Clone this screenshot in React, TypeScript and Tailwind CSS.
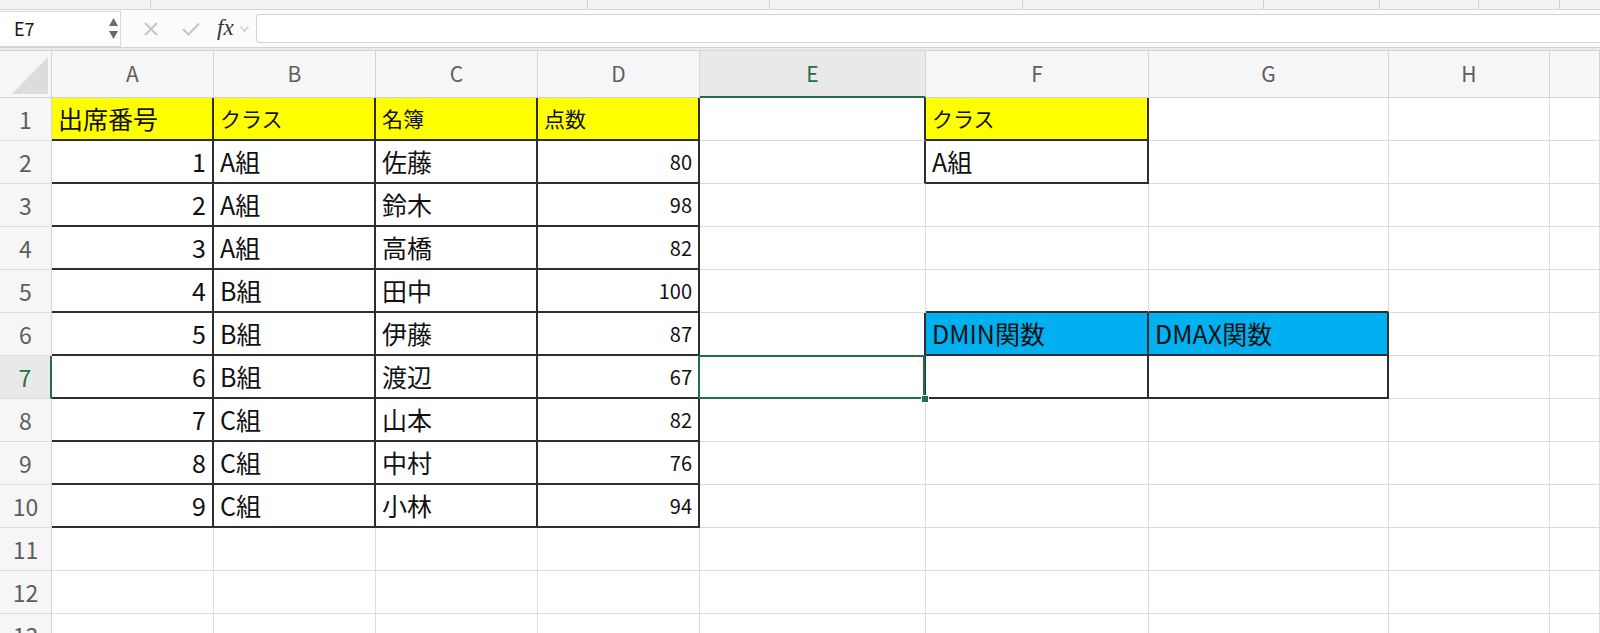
import React from "react";
import clsx from "clsx";

type CellData = {
  text: string;
  size: "big" | "head" | "num";
  right?: boolean;
  fill?: "yellow" | "blue";
};

const COLUMN_LETTERS = [ "A", "B", "C", "D", "E", "F", "G", "H", "" ];
const ROWS = [ 1, 2, 3, 4, 5, 6, 7, 8, 9, 10, 11, 12, 13 ];
const SELECTED_COL = 5;
const SELECTED_ROW = 7;

const students: [ number, string, string, number ][] = [
  [ 1, "A組", "佐藤", 80 ],
  [ 2, "A組", "鈴木", 98 ],
  [ 3, "A組", "高橋", 82 ],
  [ 4, "B組", "田中", 100 ],
  [ 5, "B組", "伊藤", 87 ],
  [ 6, "B組", "渡辺", 67 ],
  [ 7, "C組", "山本", 82 ],
  [ 8, "C組", "中村", 76 ],
  [ 9, "C組", "小林", 94 ],
];

const cells: Record<string, CellData> = {
  "1-1": { text: "出席番号", size: "big", fill: "yellow" },
  "2-1": { text: "クラス", size: "head", fill: "yellow" },
  "3-1": { text: "名簿", size: "head", fill: "yellow" },
  "4-1": { text: "点数", size: "head", fill: "yellow" },
  "6-1": { text: "クラス", size: "head", fill: "yellow" },
  "6-2": { text: "A組", size: "big" },
  "6-6": { text: "DMIN関数", size: "big", fill: "blue" },
  "7-6": { text: "DMAX関数", size: "big", fill: "blue" },
};

students.forEach( ( [ no, group, name, score ], index ) => {
  const row = index + 2;
  cells[ `1-${ row }` ] = { text: String( no ), size: "big", right: true };
  cells[ `2-${ row }` ] = { text: group, size: "big" };
  cells[ `3-${ row }` ] = { text: name, size: "big" };
  cells[ `4-${ row }` ] = { text: String( score ), size: "num", right: true };
} );

// ranges that carry the black "all borders" format
const boxes = [
  { c0: 1, c1: 4, r0: 1, r1: 10 },
  { c0: 6, c1: 6, r0: 1, r1: 2 },
  { c0: 6, c1: 7, r0: 6, r1: 7 },
];

function inBox( col: number, row: number ): boolean {
  return boxes.some( ( b ) => col >= b.c0 && col <= b.c1 && row >= b.r0 && row <= b.r1 );
}

const FONT = { fontFamily: "\"Noto Sans CJK JP\", \"Noto Sans\", sans-serif" };

function CancelIcon() {
  return (
    <svg width="16" height="16" viewBox="0 0 16 16">
      <path d="M2 2 L14 14 M14 2 L2 14" stroke="#c6c6c6" strokeWidth="2" fill="none"/>
    </svg>
  );
}

function EnterIcon() {
  return (
    <svg width="20" height="16" viewBox="0 0 20 16">
      <path d="M2 8 L7.5 13.5 L18 2.5" stroke="#c6c6c6" strokeWidth="2.2" fill="none"/>
    </svg>
  );
}

function FormulaBar() {
  return (
    <div className="flex items-center h-[37px] bg-[#fbfbfb]">
      <div className="flex items-center justify-between w-[121px] h-[36px] bg-white border-y border-r border-[#d9d9d9] pl-[14px] pr-[2px]">
        <span className="text-[18px] text-[#1a1a1a]" style={FONT}>E7</span>
        <div className="flex flex-col gap-[5px]">
          <svg width="9" height="8" viewBox="0 0 9 8"><path d="M4.5 0 L9 8 L0 8 Z" fill="#6a6a6a"/></svg>
          <svg width="9" height="8" viewBox="0 0 9 8"><path d="M0 0 L9 0 L4.5 8 Z" fill="#6a6a6a"/></svg>
        </div>
      </div>
      <div className="ml-[22px] flex items-center"><CancelIcon/></div>
      <div className="ml-[22px] flex items-center"><EnterIcon/></div>
      <span className="ml-[16px] italic text-[23px] text-[#333] leading-none pb-[2px]" style={{ fontFamily: "\"Liberation Serif\", serif" }}>fx</span>
      <svg className="ml-[6px]" width="9" height="6" viewBox="0 0 9 6"><path d="M0.5 0.5 L4.5 5 L8.5 0.5" stroke="#c8c8c8" strokeWidth="1.2" fill="none"/></svg>
      <div className="ml-[7px] flex-1 h-[29px] bg-white border-y border-l border-[#d4d4d4] rounded-l-[4px]"/>
    </div>
  );
}

function RibbonEdge() {
  return (
    <div className="flex h-[10px] bg-[#f3f3f3] border-b border-[#d6d6d6]">
      <div className="w-[151px] border-r border-[#d2d2d2]"/>
      <div className="w-[437px] border-r border-[#d2d2d2]"/>
      <div className="w-[182px] border-r border-[#d2d2d2]"/>
      <div className="w-[253px] border-r border-[#d2d2d2]"/>
      <div className="w-[241px] border-r border-[#d2d2d2]"/>
      <div className="w-[116px] border-r border-[#d2d2d2]"/>
      <div className="w-[99px] border-r border-[#d2d2d2]"/>
      <div className="w-[81px] border-r border-[#d2d2d2]"/>
      <div className="flex-1"/>
    </div>
  );
}

function Cell( { col, row }: { col: number; row: number } ) {
  const data = cells[ `${ col }-${ row }` ];
  const blackRight = inBox( col, row ) || inBox( col + 1, row );
  const blackBottom = inBox( col, row ) || inBox( col, row + 1 );
  const selected = col === SELECTED_COL && row === SELECTED_ROW;

  return (
    <div
      className={clsx(
        "relative flex items-center h-[43px] px-[6px] whitespace-nowrap text-[#111]",
        blackRight ? "border-r-2 border-r-[#2e2e2e]" : "border-r border-r-[#dcdcdc]",
        blackBottom ? "border-b-2 border-b-[#2e2e2e]" : "border-b border-b-[#dcdcdc]",
        data?.fill === "yellow" && "bg-[#ffff00]",
        data?.fill === "blue" && "bg-[#00b0f0]",
        data?.right && "justify-end",
        data?.size === "big" && "text-[25px]",
        data?.size === "head" && "text-[21px]",
        data?.size === "num" && "text-[20px]"
      )}
      style={FONT}
    >
      {data?.text}
      {selected && (
        <>
          <div className="absolute left-[-2px] top-[-1px] right-[-1px] bottom-[-1px] border-2 border-[#1f7145] z-10 pointer-events-none"/>
          <div className="absolute right-[-5px] bottom-[-5px] w-[8px] h-[8px] bg-[#1f7145] border border-white z-20"/>
        </>
      )}
    </div>
  );
}

export default function App() {
  return (
    <div className="w-[1600px] h-[633px] overflow-hidden bg-white select-none">
      <RibbonEdge/>
      <FormulaBar/>
      <div className="h-[4px] bg-[#ececec] border-y border-[#d3d3d3]"/>

      <div className="grid grid-cols-[52px_162px_162px_162px_162px_226px_223px_240px_161px_1fr]">
        <div className="flex items-end justify-end h-[47px] pr-[3px] pb-[3px] bg-[#f6f6f6] border-r border-b border-[#d4d4d4]">
          <svg width="36" height="37" viewBox="0 0 36 37"><path d="M36 0 L36 37 L0 37 Z" fill="#dcdcdc"/></svg>
        </div>
        {COLUMN_LETTERS.map( ( letter, index ) => {
          const active = index + 1 === SELECTED_COL;
          return (
            <div
              key={`h-${ index }`}
              className={clsx(
                "flex items-center justify-center h-[47px] text-[21px] border-r border-[#d4d4d4]",
                active ? "bg-[#e9e9e9] text-[#1f7145] border-b-2 border-b-[#1f7145]" : "bg-[#f6f6f6] text-[#5e5e5e] border-b border-b-[#d4d4d4]"
              )}
              style={FONT}
            >
              {letter}
            </div>
          );
        } )}

        {ROWS.map( ( row ) => (
          <React.Fragment key={row}>
            <div
              className={clsx(
                "flex items-center justify-center h-[43px] text-[23px] border-b border-[#dcdcdc]",
                row === SELECTED_ROW ? "bg-[#e9e9e9] text-[#1f7145] border-r-2 border-r-[#1f7145]" : "bg-[#f6f6f6] text-[#5e5e5e] border-r border-r-[#d4d4d4]"
              )}
              style={FONT}
            >
              {row}
            </div>
            {COLUMN_LETTERS.map( ( _, index ) => (
              <Cell key={`${ row }-${ index }`} col={index + 1} row={row}/>
            ) )}
          </React.Fragment>
        ) )}
      </div>
    </div>
  );
}
